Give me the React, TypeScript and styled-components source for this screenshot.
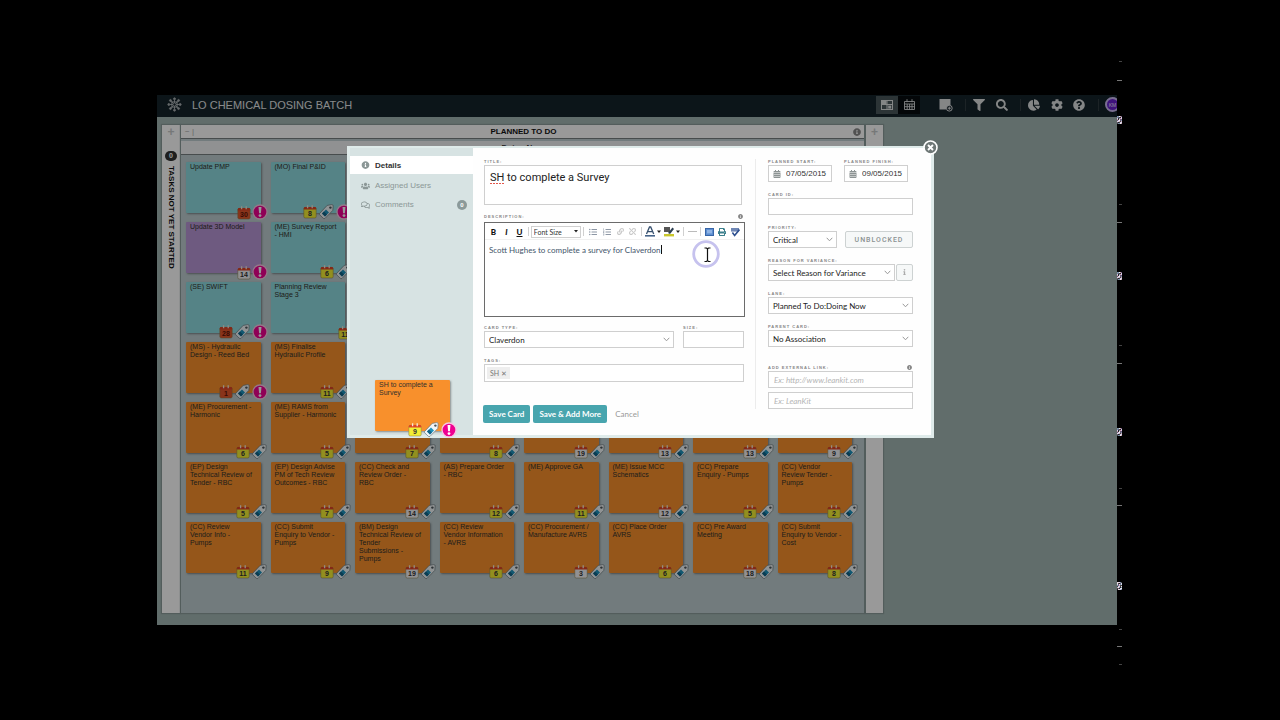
import React from "react";
import styled, { createGlobalStyle, css } from "styled-components";
import {
  FaInfoCircle, FaUsers, FaRegComments, FaCalendarAlt, FaFilter, FaSearch, FaChartPie, FaCog,
  FaQuestionCircle, FaListUl, FaListOl, FaLink, FaUnlink, FaPrint, FaInfo,
} from "react-icons/fa";

const GlobalStyle = createGlobalStyle`
  * { box-sizing: border-box; }
  body { margin: 0; background: #000; font-family: "Liberation Sans", Arial, sans-serif; }
  button, input, select, textarea { font-family: inherit; margin: 0; }
`;

const Page = styled.div`
  display: grid;
  grid-template-columns: 157px minmax(0, 1fr) 163px;
  min-height: 100vh;
  background: #000;
`;

const Shell = styled.div`
  grid-column: 2;
  position: relative;
  display: flex;
  flex-direction: column;
  margin: 95px 0;
  overflow: hidden;
  background: #a2b6b3;
`;

/* ---------- top bar ---------- */
const TopBar = styled.header`
  display: flex;
  align-items: center;
  height: 22px;
  padding: 0 0 3px 10px;
  background: #15232a;
  color: #e2e5e6;
`;
const BoardName = styled.h1`
  flex: 1;
  margin: 0 0 0 10px;
  font-size: 11px;
  font-weight: 400;
  line-height: 14px;
`;
const Tool = styled.button<{ $bg?: string; $w?: number }>`
  display: flex;
  align-items: center;
  justify-content: center;
  width: ${(p) => p.$w || 22}px;
  height: 18px;
  padding: 0;
  border: 0;
  background: ${(p) => p.$bg || "transparent"};
  color: #dcdfe0;
  font-size: 12px;
`;
const ToolRule = styled.span<{ $l?: number }>`
  width: 1px;
  height: 12px;
  margin-left: ${(p) => p.$l || 0}px;
  background: #2f3b40;
`;
const Tools = styled.nav`
  display: flex;
  align-items: center;
  margin-right: -3px;
`;
const Avatar = styled.button`
  width: 15px;
  height: 15px;
  margin-left: 6px;
  padding: 0;
  border: 2px solid #c9b8f0;
  border-radius: 50%;
  background: #6a1fd0;
  color: #f0e0ff;
  font-size: 5px;
  line-height: 10px;
`;

/* ---------- board ---------- */
const Board = styled.main`
  flex: 1;
  display: flex;
  gap: 1px;
  padding: 8px 234px 12px 5px;
`;
const Rail = styled.aside<{ $w: number }>`
  display: flex;
  flex: 0 0 ${(p) => p.$w}px;
  flex-direction: column;
  align-items: center;
  background: #fff;
  box-shadow: 0 0 1px 1px #8a9c9a;
`;
const RailPlus = styled.button`
  padding: 0;
  border: 0;
  background: none;
  color: #c5c9c9;
  font-size: 12px;
  font-weight: 700;
  line-height: 14px;
`;
const RailCount = styled.span`
  width: 12px;
  margin-top: 12px;
  border-radius: 5px;
  background: #333;
  color: #fff;
  font-size: 7px;
  font-weight: 700;
  line-height: 10px;
  text-align: center;
`;
const RailTitle = styled.h2`
  margin: 5px 0 0;
  color: #111;
  font-size: 8px;
  font-weight: 700;
  line-height: 10px;
  writing-mode: vertical-rl;
`;
const Lane = styled.section`
  flex: 1;
  min-width: 0;
  margin-right: 1px;
  background: #becdd0;
  box-shadow: 0 0 1px 1px #8a9c9a;
`;
const LaneHead = styled.div`
  display: flex;
  align-items: center;
  height: 14px;
  padding: 0 3px 0 4px;
  border-bottom: 1px solid #777f80;
  background: #fff;
  color: #aaa;
  font-size: 8px;
`;
const LaneTitle = styled.h2`
  flex: 1;
  margin: 0;
  color: #111;
  font-size: 8px;
  font-weight: 700;
  line-height: 12px;
  text-align: center;
`;
const SubLane = styled.h3`
  height: 14px;
  margin: 2px 0 0;
  border-bottom: 1px solid #777f80;
  background: #f1f2f3;
  color: #333;
  font-size: 8px;
  line-height: 14px;
  text-align: center;
`;
const CardGrid = styled.div`
  display: grid;
  grid-template-columns: repeat(8, minmax(0, 1fr));
  grid-auto-rows: 51px;
  gap: 9px 10px;
  padding: 7px 12px 40px 5px;
`;

/* ---------- cards ---------- */
type Tone = "teal" | "purple" | "orange";
const tones: Record<Tone, string> = { teal: "#8edadf", purple: "#b896d6", orange: "#f8902c" };

const CardBox = styled.article<{ $tone: Tone; $col?: number }>`
  position: relative;
  height: 51px;
  padding: 1px 0 0 4px;
  border-radius: 1px;
  background: ${(p) => tones[p.$tone]};
  box-shadow: 1px 1px 2px rgba(60, 60, 60, 0.5);
  color: #33302c;
  font-size: 7px;
  line-height: 8px;
  white-space: pre;
  ${(p) => p.$col && css`grid-column: ${p.$col};`}
`;
const Badges = styled.div`
  position: absolute;
  right: -7px;
  bottom: -7px;
  display: flex;
  align-items: center;
  gap: 1px;
`;

type Cal = "y" | "w" | "r";
const calFill: Record<Cal, string> = { y: "#f3ee35", w: "#f2f2f5", r: "#e4572c" };

const CalBadge = ({ kind, n }: { kind: Cal; n: string }) => (
  <svg width="14" height="15" viewBox="0 0 14 15">
    <rect x=".8" y="3.4" width="12.4" height="10.6" rx="1.4" fill={calFill[kind]} stroke="#8b7a40" strokeWidth=".5" />
    <path d="M.8 5.6V4.4q0-1.4 1.4-1.4h9.6q1.4 0 1.4 1.4v1.2Z" fill="#dd4326" />
    <path d="M4.6 1.2v3M9.2 1.2v3" stroke="#f7e6d8" strokeWidth="1.3" />
    <text x="7" y="12.2" fontSize="7" fontWeight="700" textAnchor="middle" fill={kind === "r" ? "#5c1308" : "#333"}>{n}</text>
  </svg>
);
const TagBadge = () => (
  <svg width="17" height="17" viewBox="0 0 17 17">
    <path d="M1.6 10.4 9.2 2.4 13.8 1.6Q15.2 1.6 15.2 3L14.8 7.4 7 15.4Q6 16 5.2 15.2L1.7 11.8Q1.1 11 1.6 10.4Z" fill="#f1f5f7" stroke="#68777c" strokeWidth=".7" />
    <path d="M4 10.4 8 6.4 11 9.4 7 13.4Z" fill="#1d93bd" />
    <path d="M4 10.4 6 8.4 9 11.4 7 13.4Z" fill="#136488" />
    <circle cx="12.4" cy="4.6" r="1.2" fill="#4b555a" />
  </svg>
);
const AlertBadge = () => (
  <svg width="16" height="16" viewBox="0 0 16 16">
    <circle cx="8" cy="8" r="7" fill="#ee0090" stroke="#f6c8e2" strokeWidth="1.3" />
    <path d="M6.5 3h3L8.9 9.2H7.1Z" fill="#fff" />
    <circle cx="8" cy="11.6" r="1.4" fill="#fff" />
  </svg>
);

interface CardData { text: string; tone?: Tone; cal: Cal; n: string; tag?: boolean; alert?: boolean; col: number }
const TaskCard = ({ c }: { c: CardData }) => (
  <CardBox $tone={c.tone || "orange"} $col={c.col}>
    {c.text}
    <Badges>
      <CalBadge kind={c.cal} n={c.n} />
      {c.tag !== false && <TagBadge />}
      {c.alert && <AlertBadge />}
    </Badges>
  </CardBox>
);

const cards: CardData[] = [
  { col: 1, text: "Update PMP", tone: "teal", cal: "r", n: "30", tag: false, alert: true },
  { col: 2, text: "(MO) Final P&ID", tone: "teal", cal: "y", n: "8", alert: true },
  { col: 1, text: "Update 3D Model", tone: "purple", cal: "w", n: "14", tag: false, alert: true },
  { col: 2, text: "(ME) Survey Report\n- HMI", tone: "teal", cal: "y", n: "6" },
  { col: 1, text: "(SE) SWIFT", tone: "teal", cal: "r", n: "28", alert: true },
  { col: 2, text: "Planning Review\nStage 3", tone: "teal", cal: "y", n: "11", tag: false },
  { col: 1, text: "(MS) - Hydraulic\nDesign - Reed Bed", cal: "r", n: "1", alert: true },
  { col: 2, text: "(MS) Finalise\nHydraulic Profile", cal: "y", n: "11" },
  { col: 1, text: "(ME) Procurement -\nHarmonic", cal: "y", n: "6" },
  { col: 2, text: "(ME) RAMS from\nSupplier - Harmonic", cal: "y", n: "5" },
  { col: 3, text: "", cal: "y", n: "7" },
  { col: 4, text: "", cal: "y", n: "8" },
  { col: 5, text: "", cal: "w", n: "19" },
  { col: 6, text: "", cal: "w", n: "13" },
  { col: 7, text: "", cal: "w", n: "13" },
  { col: 8, text: "", cal: "w", n: "9" },
  { col: 1, text: "(EP) Design\nTechnical Review of\nTender - RBC", cal: "y", n: "5" },
  { col: 2, text: "(EP) Design Advise\nPM of Tech Review\nOutcomes - RBC", cal: "y", n: "7" },
  { col: 3, text: "(CC) Check and\nReview Order -\nRBC", cal: "w", n: "14" },
  { col: 4, text: "(AS) Prepare Order\n- RBC", cal: "y", n: "12" },
  { col: 5, text: "(ME) Approve GA", cal: "y", n: "11" },
  { col: 6, text: "(ME) Issue MCC\nSchematics", cal: "w", n: "12" },
  { col: 7, text: "(CC) Prepare\nEnquiry - Pumps", cal: "y", n: "5" },
  { col: 8, text: "(CC) Vendor\nReview Tender -\nPumps", cal: "y", n: "2" },
  { col: 1, text: "(CC) Review\nVendor Info -\nPumps", cal: "y", n: "11" },
  { col: 2, text: "(CC) Submit\nEnquiry to Vendor -\nPumps", cal: "y", n: "9" },
  { col: 3, text: "(BM) Design\nTechnical Review of\nTender\nSubmissions -\nPumps", cal: "w", n: "19" },
  { col: 4, text: "(CC) Review\nVendor Information\n- AVRS", cal: "y", n: "6" },
  { col: 5, text: "(CC) Procurement /\nManufacture AVRS", cal: "w", n: "3" },
  { col: 6, text: "(CC) Place Order\nAVRS", cal: "y", n: "6" },
  { col: 7, text: "(CC) Pre Award\nMeeting", cal: "w", n: "18" },
  { col: 8, text: "(CC) Submit\nEnquiry to Vendor -\nCost", cal: "y", n: "8" },
];

/* ---------- dialog ---------- */
const Overlay = styled.div`
  position: absolute;
  inset: 0;
  display: flex;
  align-items: flex-start;
  justify-content: center;
  padding: 51px 0 0 7px;
  background: rgba(0, 0, 0, 0.4);
`;
const Dialog = styled.div`
  position: relative;
  display: flex;
  width: 100%;
  max-width: 587px;
  min-height: 292px;
  border: 3px solid #dfebea;
  border-top-width: 2px;
  background: #fefefe;
`;
const CloseButton = styled.button`
  position: absolute;
  top: -8px;
  right: -7px;
  width: 15px;
  height: 15px;
  padding: 0;
  border: 0;
  background: none;
  line-height: 0;
`;
const Side = styled.nav`
  display: flex;
  flex: 0 0 123px;
  flex-direction: column;
  padding: 8px 0 4px;
  background: #d7e3e3;
`;
const SideItem = styled.button<{ $on?: boolean }>`
  display: flex;
  align-items: center;
  height: ${(p) => (p.$on ? 18 : 19)}px;
  margin-bottom: ${(p) => (p.$on ? 2 : 0)}px;
  padding: 0 6px 0 11px;
  border: 0;
  background: ${(p) => (p.$on ? "#fff" : "transparent")};
  color: ${(p) => (p.$on ? "#333" : "#8b9796")};
  font-size: 8px;
  font-weight: ${(p) => (p.$on ? 700 : 400)};
  text-align: left;
  svg { width: 9px; height: 8px; color: #8b9796; }
  span { flex: 1; margin-left: 5px; }
`;
const Count = styled.b`
  width: 10px;
  border-radius: 5px;
  background: #8b9a9a;
  color: #fff;
  font-size: 6px;
  line-height: 10px;
  text-align: center;
`;
const Preview = styled.div`
  width: 75px;
  margin: auto 0 0 25px;
`;
const Form = styled.form`
  display: flex;
  flex: 1;
  min-width: 0;
  padding: 11px 18px 8px 11px;
  font-family: Lato, "Liberation Sans", sans-serif;
`;
const MainCol = styled.div`
  display: flex;
  flex: 1;
  min-width: 0;
  flex-direction: column;
  gap: 8px;
`;
const SideCol = styled.div`
  display: flex;
  flex: 0 0 158px;
  flex-direction: column;
  gap: 10px;
  height: 250px;
  margin-left: 11px;
  padding-left: 12px;
  border-left: 1px solid #ececec;
`;
const Field = styled.div<{ $w?: number; $top?: number }>`
  position: relative;
  ${(p) => (p.$w ? css`flex: 0 0 ${p.$w}px;` : css`flex: 0 1 auto;`)}
  margin-top: ${(p) => p.$top || 0}px;
`;
const GrowField = styled(Field)`
  flex: 1;
`;
const Label = styled.label`
  display: flex;
  justify-content: space-between;
  height: 6px;
  color: #858585;
  font-family: "Liberation Sans", sans-serif;
  font-size: 4px;
  font-weight: 700;
  letter-spacing: 1px;
  line-height: 6px;
  text-transform: uppercase;
  svg { width: 5px; height: 5px; margin-right: 1px; }
`;
const boxed = css`
  display: block;
  width: 100%;
  height: 17px;
  border: 1px solid #cfcfcf;
  border-radius: 0;
  background: #fff;
  color: #222;
  outline: 0;
`;
const TextInput = styled.input`
  ${boxed}
  padding: 0 5px;
  font-size: 8px;
  &::placeholder { color: #b5b5b5; font-style: italic; }
`;
const TitleArea = styled.textarea`
  ${boxed}
  width: calc(100% - 2px);
  height: 40px;
  padding: 5px;
  font-family: Roboto, "Liberation Sans", sans-serif;
  font-size: 11px;
  line-height: 14px;
  resize: none;
`;
const Squiggle = styled.svg`
  position: absolute;
  top: 23px;
  left: 6px;
`;
const Row = styled.div<{ $gap: number }>`
  display: flex;
  align-items: flex-end;
  gap: ${(p) => p.$gap}px;
`;
const SelectWrap = styled.div`
  display: grid;
  align-items: center;
  > * { grid-area: 1 / 1; }
  svg { justify-self: end; margin-right: 4px; pointer-events: none; }
`;
const SelectBox = styled.select`
  ${boxed}
  padding: 0 4px;
  appearance: none;
  font-size: 8px;
`;
const DateBox = styled.div`
  ${boxed}
  display: flex;
  align-items: center;
  padding-left: 4px;
  svg { flex: none; width: 8px; height: 8px; color: #8d9494; }
  input { width: 100%; min-width: 0; padding: 0 0 0 5px; border: 0; background: none; color: #333; font-family: "Liberation Sans", sans-serif; font-size: 8px; outline: 0; }
`;
const SmallButton = styled.button<{ $w: number }>`
  width: ${(p) => p.$w}px;
  height: 17px;
  flex: none;
  padding: 0;
  border: 1px solid #cdd2d2;
  border-radius: 2px;
  background: #f6f8f8;
  color: #8a9292;
  font-family: Roboto, "Liberation Sans", sans-serif;
  font-size: 7px;
  font-weight: 500;
  letter-spacing: 1px;
  svg { width: 5px; height: 6px; color: #aaa; }
`;
const Editor = styled.div`
  position: relative;
  height: 95px;
  margin: 2px -1px 0 0;
  border: 1px solid #6b6b6b;
  background: #fff;
`;
const EditorBar = styled.div`
  display: flex;
  align-items: center;
  height: 17px;
  padding: 1px 2px 0;
  border-bottom: 1px solid #f1f1f1;
`;
const EditBtn = styled.button<{ $w?: number; $dim?: boolean }>`
  display: flex;
  align-items: center;
  justify-content: center;
  width: ${(p) => p.$w || 13}px;
  height: 12px;
  flex: none;
  padding: 0;
  border: 0;
  background: none;
  color: ${(p) => (p.$dim ? "#c9c9c9" : "#111")};
  font-size: 8px;
  font-weight: 900;
  svg { flex: none; }
`;
const EditRule = styled.span`
  width: 1px;
  height: 9px;
  margin: 0 2px;
  background: #d0d0d0;
`;
const FontSelect = styled.div`
  display: grid;
  width: 50px;
  flex: none;
  align-items: center;
  > * { grid-area: 1 / 1; }
  select { height: 12px; padding: 0 2px; border: 1px solid #d0d0d0; background: #fff; color: #333; font-size: 7px; appearance: none; }
  svg { justify-self: end; margin-right: 3px; pointer-events: none; }
`;
const DescArea = styled.textarea`
  display: block;
  width: 100%;
  height: 74px;
  padding: 4px 4px;
  border: 0;
  background: none;
  color: #3f556a;
  font-size: 8px;
  line-height: 12px;
  outline: 0;
  resize: none;
`;
const Caret = styled.span`
  position: absolute;
  top: 22px;
  left: 176px;
  width: 1px;
  height: 9px;
  background: #111;
`;
const Pointer = styled.svg`
  position: absolute;
  top: 17px;
  left: 207px;
`;
const TagBox = styled.div`
  ${boxed}
  display: flex;
  align-items: center;
  height: 18px;
  padding: 0 2px;
  input { flex: 1; min-width: 0; border: 0; background: none; outline: 0; font-size: 8px; padding: 0; }
`;
const Chip = styled.button`
  height: 12px;
  padding: 0 3px;
  border: 0;
  background: #eee;
  color: #777;
  font-size: 7px;
`;
const Actions = styled.div`
  display: flex;
  align-items: center;
  gap: 3px;
  margin: 15px 0 0 -1px;
`;
const Primary = styled.button`
  height: 18px;
  padding: 0 6px;
  border: 0;
  border-radius: 2px;
  background: #48a5ae;
  color: #fff;
  font-size: 8px;
  font-weight: 700;
`;
const Cancel = styled.button`
  padding: 0 5px;
  border: 0;
  background: none;
  color: #999;
  font-size: 8px;
`;

/* ---------- strip beside the app ---------- */
const Strip = styled.svg`
  grid-column: 3;
  width: 8px;
  height: 720px;
`;
const bits = ["#e8d8e0", "#6b5b78", "#d0d8e8", "#c8a0b0", "#444", "#f0f0f0", "#7890a8", "#222", "#d8c8e8"];
const Noise = ({ y }: { y: number }) => (
  <g>
    {Array.from({ length: 40 }, (_, i) => (
      <rect key={i} x={i % 5} y={y + Math.floor(i / 5)} width="1" height="1" fill={bits[(i * i * 13 + i * 5 + y * 3 + (i >> 2)) % bits.length]} />
    ))}
  </g>
);

const Chevron = () => (
  <svg width="7" height="5" viewBox="0 0 7 5"><path d="M.7.8 3.5 3.8 6.3.8" fill="none" stroke="#999" strokeWidth="1" /></svg>
);
const Drop = () => (
  <svg width="4" height="3" viewBox="0 0 4 3"><path d="M0 0h4L2 2.6Z" fill="#222" /></svg>
);
const Logo = () => (
  <svg width="15" height="15" viewBox="0 0 15 15">
    <g fill="none" stroke="#a9b0b2" strokeWidth=".8">
      {[0, 45, 90, 135, 180, 225, 270, 315].map((a) => (
        <g key={a} transform={`rotate(${a} 7.5 7.5)`}>
          <path d="M7.5 6V2.5" />
          <circle cx="7.5" cy="1.8" r="1" fill="#a9b0b2" />
          <circle cx="7.5" cy="4.5" r=".7" fill="#a9b0b2" />
        </g>
      ))}
      <circle cx="7.5" cy="7.5" r="1.6" />
    </g>
  </svg>
);

const Pick = ({ id, value }: { id: string; value: string }) => (
  <SelectWrap>
    <SelectBox id={id} defaultValue={value}><option>{value}</option></SelectBox>
    <Chevron />
  </SelectWrap>
);

export default function App() {
  return (
    <Page>
      <GlobalStyle />
      <Shell>
        <TopBar>
          <Logo />
          <BoardName>LO CHEMICAL DOSING BATCH</BoardName>
          <Tools>
            <Tool $bg="#4a575b" aria-label="Board view">
              <svg width="12" height="10" viewBox="0 0 12 10">
                <rect x=".5" y=".5" width="11" height="9" fill="none" stroke="#dcdfe0" />
                <path d="M6 0v10M1 4.5h10" stroke="#dcdfe0" />
                <rect x="7.2" y="5.6" width="3" height="3" fill="#dcdfe0" />
                <rect x="1" y="1" width="4.5" height="3" fill="#dcdfe0" />
              </svg>
            </Tool>
            <Tool $bg="#080d10" aria-label="Calendar view">
              <svg width="11" height="11" viewBox="0 0 11 11">
                <path d="M.5 2.5h10v8H.5ZM.5 5h10M.5 7.7h10M3.2 5v5.5M5.6 5v5.5M8 5v5.5M3 .2v3M8 .2v3" fill="none" stroke="#dcdfe0" strokeWidth=".9" />
              </svg>
            </Tool>
            <Tool $w={52} aria-label="Add card">
              <svg width="14" height="14" viewBox="0 0 14 14">
                <path d="M.5 1h11v6.2a3.8 3.8 0 0 0-4.4 4.3H.5Z" fill="#dcdfe0" />
                <circle cx="10.3" cy="10.2" r="2.9" fill="none" stroke="#dcdfe0" strokeWidth="1" />
                <path d="M10.3 8.6v3.2M8.7 10.2h3.2" stroke="#dcdfe0" strokeWidth="1" />
              </svg>
            </Tool>
            <ToolRule $l={-7} />
            <Tool $w={25} aria-label="Filter"><FaFilter /></Tool>
            <Tool $w={22} aria-label="Search"><FaSearch /></Tool>
            <ToolRule $l={7} />
            <Tool $w={26} aria-label="Reports"><FaChartPie /></Tool>
            <Tool $w={20} aria-label="Settings"><FaCog /></Tool>
            <Tool $w={24} aria-label="Help"><FaQuestionCircle /></Tool>
            <ToolRule $l={7} />
            <Avatar aria-label="Account">KM</Avatar>
          </Tools>
        </TopBar>

        <Board>
          <Rail $w={18}>
            <RailPlus>+</RailPlus>
            <RailCount>0</RailCount>
            <RailTitle>TASKS NOT YET STARTED</RailTitle>
          </Rail>
          <Lane>
            <LaneHead>
              <span>− |</span>
              <LaneTitle>PLANNED TO DO</LaneTitle>
              <FaInfoCircle color="#888" size={8} />
            </LaneHead>
            <SubLane>Doing Now</SubLane>
            <CardGrid>
              {cards.map((c, i) => <TaskCard key={i} c={c} />)}
            </CardGrid>
          </Lane>
          <Rail $w={17}><RailPlus>+</RailPlus></Rail>
        </Board>

        <Overlay>
          <Dialog role="dialog" aria-label="Card details">
            <Side>
              <SideItem $on><FaInfoCircle /><span>Details</span></SideItem>
              <SideItem><FaUsers /><span>Assigned Users</span></SideItem>
              <SideItem><FaRegComments /><span>Comments</span><Count>0</Count></SideItem>
              <Preview>
                <TaskCard c={{ col: 1, text: "SH to complete a\nSurvey", cal: "y", n: "9", alert: true }} />
              </Preview>
            </Side>
            <Form onSubmit={(e) => e.preventDefault()}>
              <MainCol>
                <Field>
                  <Label htmlFor="title">Title:</Label>
                  <TitleArea id="title" spellCheck={false} defaultValue="SH to complete a Survey" />
                  <Squiggle width="15" height="3" viewBox="0 0 15 3">
                    <path d="M0 1.5h15" stroke="#e2574c" strokeWidth="1" strokeDasharray="2 1" />
                  </Squiggle>
                </Field>
                <Field $top={1}>
                  <Label htmlFor="desc">Description:<FaInfoCircle /></Label>
                  <Editor>
                    <EditorBar>
                      <EditBtn aria-label="Bold">B</EditBtn>
                      <EditBtn aria-label="Italic"><i>I</i></EditBtn>
                      <EditBtn aria-label="Underline"><u>U</u></EditBtn>
                      <EditRule />
                      <FontSelect>
                        <select aria-label="Font size" defaultValue="Font Size"><option>Font Size</option></select>
                        <Drop />
                      </FontSelect>
                      <EditRule />
                      <EditBtn $w={14} aria-label="Bullets"><FaListUl color="#8d97a5" /></EditBtn>
                      <EditBtn $w={14} aria-label="Numbers"><FaListOl color="#8d97a5" /></EditBtn>
                      <EditBtn $w={13} $dim aria-label="Link"><FaLink size={7} /></EditBtn>
                      <EditBtn $w={12} $dim aria-label="Unlink"><FaUnlink size={7} /></EditBtn>
                      <EditRule />
                      <EditBtn $w={19} aria-label="Text colour">
                        <svg width="16" height="11" viewBox="0 0 16 11">
                          <path d="M1.5 8 4.5 1h1.2L8.7 8M2.8 5.7h4.6" fill="none" stroke="#37506e" strokeWidth="1.3" />
                          <rect x="0" y="9" width="10" height="1.6" fill="#46648a" />
                          <path d="M12 4.5h4l-2 2.4Z" fill="#222" />
                        </svg>
                      </EditBtn>
                      <EditBtn $w={19} aria-label="Highlight colour">
                        <svg width="16" height="11" viewBox="0 0 16 11">
                          <rect x="0" y="1" width="6" height="5" fill="#555" />
                          <path d="M4 7 8.5 1.5 10 3 6 8Z" fill="#2c3e50" />
                          <rect x="0" y="8" width="10" height="2.4" fill="#c9c62c" />
                          <path d="M12 4.5h4l-2 2.4Z" fill="#222" />
                        </svg>
                      </EditBtn>
                      <EditRule />
                      <EditBtn $w={12} $dim aria-label="Rule">
                        <svg width="9" height="2" viewBox="0 0 9 2"><rect width="9" height="1" fill="#bbb" /></svg>
                      </EditBtn>
                      <EditRule />
                      <EditBtn aria-label="Full screen">
                        <svg width="9" height="8" viewBox="0 0 9 8">
                          <rect x=".5" y=".5" width="8" height="7" fill="#5d8ed0" stroke="#3866a8" />
                          <rect x="2" y="2" width="5" height="3.4" fill="#8fb3e4" />
                        </svg>
                      </EditBtn>
                      <EditBtn aria-label="Print"><FaPrint color="#3c7f8c" size={8} /></EditBtn>
                      <EditBtn aria-label="Check spelling">
                        <svg width="10" height="10" viewBox="0 0 10 10">
                          <rect x="1" y="1" width="8" height="3.6" fill="#6f87b5" />
                          <path d="M2.4 5.6 4.6 8.4 9.4 2.6" fill="none" stroke="#2d4f8f" strokeWidth="1.6" />
                        </svg>
                      </EditBtn>
                    </EditorBar>
                    <DescArea id="desc" spellCheck={false} defaultValue="Scott Hughes to complete a survey for Claverdon" />
                    <Caret />
                    <Pointer width="28" height="28" viewBox="0 0 28 28">
                      <circle cx="14" cy="14" r="12.3" fill="none" stroke="#c6c2ee" strokeWidth="2.8" />
                      <path d="M12.5 8h2l1 1 1-1h2M12.5 21.5h2l1-1 1 1h2M15.5 9v11.5" fill="none" stroke="#111" strokeWidth="1.2" />
                    </Pointer>
                  </Editor>
                </Field>
                <Row $gap={9}>
                  <GrowField>
                    <Label htmlFor="type">Card type:</Label>
                    <Pick id="type" value="Claverdon" />
                  </GrowField>
                  <Field $w={61}>
                    <Label htmlFor="size">Size:</Label>
                    <TextInput id="size" />
                  </Field>
                </Row>
                <Field $top={2}>
                  <Label htmlFor="tags">Tags:</Label>
                  <TagBox><Chip type="button">SH ✕</Chip><input id="tags" /></TagBox>
                </Field>
                <Actions>
                  <Primary type="submit">Save Card</Primary>
                  <Primary type="button">Save &amp; Add More</Primary>
                  <Cancel type="button">Cancel</Cancel>
                </Actions>
              </MainCol>
              <SideCol>
                <Row $gap={12}>
                  <Field $w={64}>
                    <Label htmlFor="start">Planned start:</Label>
                    <DateBox><FaCalendarAlt /><input id="start" defaultValue="07/05/2015" /></DateBox>
                  </Field>
                  <Field $w={64}>
                    <Label htmlFor="finish">Planned finish:</Label>
                    <DateBox><FaCalendarAlt /><input id="finish" defaultValue="09/05/2015" /></DateBox>
                  </Field>
                </Row>
                <Field>
                  <Label htmlFor="cardid">Card ID:</Label>
                  <TextInput id="cardid" />
                </Field>
                <Row $gap={8}>
                  <GrowField>
                    <Label htmlFor="priority">Priority:</Label>
                    <Pick id="priority" value="Critical" />
                  </GrowField>
                  <SmallButton type="button" $w={68}>UNBLOCKED</SmallButton>
                </Row>
                <Row $gap={1}>
                  <GrowField>
                    <Label htmlFor="reason">Reason for variance:</Label>
                    <Pick id="reason" value="Select Reason for Variance" />
                  </GrowField>
                  <SmallButton type="button" $w={17} aria-label="About variance"><FaInfo /></SmallButton>
                </Row>
                <Field>
                  <Label htmlFor="lane">Lane:</Label>
                  <Pick id="lane" value="Planned To Do:Doing Now" />
                </Field>
                <Field>
                  <Label htmlFor="parent">Parent card:</Label>
                  <Pick id="parent" value="No Association" />
                </Field>
                <Field $top={8}>
                  <Label htmlFor="url">Add external link:<FaInfoCircle /></Label>
                  <TextInput id="url" placeholder="Ex: http://www.leankit.com" />
                </Field>
                <Field $top={-6}>
                  <TextInput aria-label="Link label" placeholder="Ex: LeanKit" />
                </Field>
              </SideCol>
            </Form>
            <CloseButton aria-label="Close">
              <svg width="15" height="15" viewBox="0 0 15 15">
                <circle cx="7.5" cy="7.5" r="6.5" fill="#6f7877" stroke="#fff" strokeWidth="1.6" />
                <path d="M5 5l5 5M10 5l-5 5" stroke="#fff" strokeWidth="1.9" />
              </svg>
            </CloseButton>
          </Dialog>
        </Overlay>
      </Shell>
      <Strip viewBox="0 0 8 720">
        {[116, 272, 428, 582].map((y) => <Noise key={y} y={y} />)}
        {[61, 80, 204, 222, 345, 363, 488, 505, 629, 646, 664].map((y, i) => (
          <rect key={y} x={i % 2 ? 0 : 2} y={y} width={i % 2 ? 5 : 3} height="1" fill={i % 2 ? "#777" : "#444"} />
        ))}
      </Strip>
    </Page>
  );
}
